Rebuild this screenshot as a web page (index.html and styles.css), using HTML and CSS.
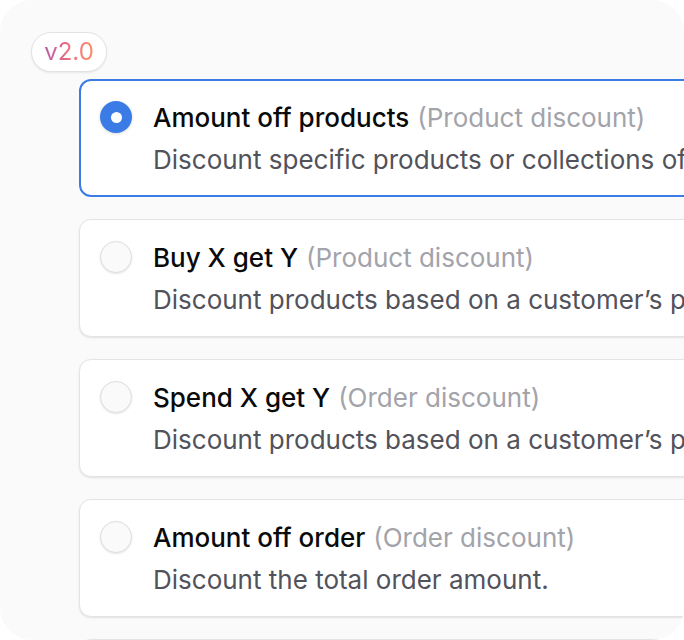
FILE: index.html
```html
<!DOCTYPE html>
<html>
<head>
<meta charset="utf-8">
<link rel="stylesheet" href="styles.css">
</head>
<body>
<div class="frame">
  <div class="badge"><span class="badge-text">v2.0</span></div>
  <div class="list">
    <div class="card selected">
      <div class="radio on"><span class="dot"></span></div>
      <div class="body">
        <div class="title">Amount off products <span class="muted">(Product discount)</span></div>
        <div class="desc">Discount specific products or collections of products.</div>
      </div>
    </div>
    <div class="card">
      <div class="radio"></div>
      <div class="body">
        <div class="title">Buy X get Y <span class="muted">(Product discount)</span></div>
        <div class="desc">Discount products based on a customer’s purchase.</div>
      </div>
    </div>
    <div class="card">
      <div class="radio"></div>
      <div class="body">
        <div class="title">Spend X get Y <span class="muted">(Order discount)</span></div>
        <div class="desc">Discount products based on a customer’s purchase.</div>
      </div>
    </div>
    <div class="card">
      <div class="radio"></div>
      <div class="body">
        <div class="title">Amount off order <span class="muted">(Order discount)</span></div>
        <div class="desc">Discount the total order amount.</div>
      </div>
    </div>
    <div class="card">
      <div class="radio"></div>
      <div class="body">
        <div class="title">Free shipping <span class="muted">(Shipping discount)</span></div>
        <div class="desc">Offer free shipping on an order.</div>
      </div>
    </div>
  </div>
</div>
</body>
</html>
```
FILE: styles.css
```css
html, body {
  margin: 0;
  padding: 0;
  background: #ffffff;
}
body {
  font-family: Inter, "Liberation Sans", sans-serif;
  width: 684px;
  height: 640px;
  overflow: hidden;
}
.frame {
  width: 684px;
  height: 640px;
  box-sizing: border-box;
  background: #fafafa;
  border-radius: 32px;
  overflow: hidden;
  padding: 32px 0 0 31px;
}
.badge {
  display: inline-flex;
  align-items: center;
  justify-content: center;
  box-sizing: border-box;
  width: 76px;
  height: 40px;
  border-radius: 20px;
  background: #ffffff;
  border: 1px solid #e2e2e2;
  box-shadow: 0 1px 2px rgba(0,0,0,0.08);
}
.badge-text {
  font-size: 24px;
  line-height: 1;
  font-weight: 400;
  background: linear-gradient(90deg, #b85aa8 0%, #ee6f7e 50%, #ff8c66 100%);
  -webkit-background-clip: text;
  background-clip: text;
  color: transparent;
}
.list {
  display: flex;
  flex-direction: column;
  gap: 22px;
  margin-left: 48px;
  margin-top: 7px;
}
.card {
  display: flex;
  align-items: flex-start;
  gap: 21px;
  width: 720px;
  box-sizing: border-box;
  background: #ffffff;
  border: 1px solid #e4e4e7;
  border-radius: 12px;
  padding: 17px 20px 15px 20px;
  box-shadow: 0 1px 2px rgba(0,0,0,0.10);
  white-space: nowrap;
}
.card.selected {
  border: 2px solid #3b7be6;
  padding: 16px 19px 14px 19px;
  box-shadow: none;
}
.radio {
  flex: none;
  width: 32px;
  height: 32px;
  box-sizing: border-box;
  border-radius: 50%;
  margin-top: 4px;
  background: #fafafa;
  border: 1px solid #dedee0;
  box-shadow: 0 1px 2px rgba(0,0,0,0.10);
}
.radio.on {
  background: #3b7be6;
  border: none;
  display: flex;
  align-items: center;
  justify-content: center;
  box-shadow: 0 1px 3px rgba(0,0,0,0.15);
}
.dot {
  width: 11px;
  height: 11px;
  border-radius: 50%;
  background: #ffffff;
}
.body {
  display: flex;
  flex-direction: column;
}
.title {
  font-size: 26px;
  line-height: 42px;
  font-weight: 500;
  color: #0a0a0a;
}
.muted {
  font-weight: 400;
  color: #a3a3aa;
  margin-left: 1px;
}
.desc {
  font-size: 26px;
  line-height: 42px;
  font-weight: 400;
  color: #52525b;
}
```
